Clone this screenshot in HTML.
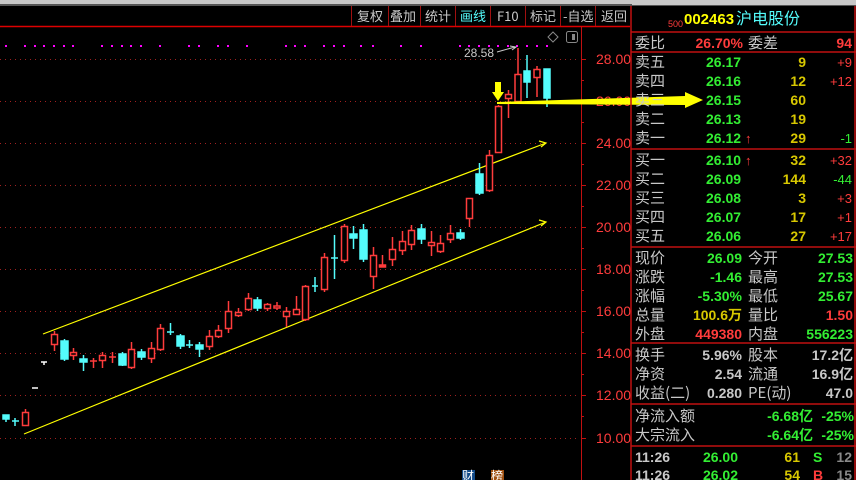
<!DOCTYPE html>
<html><head><meta charset="utf-8"><style>
html,body{margin:0;padding:0;background:#000;width:856px;height:480px;overflow:hidden}
svg{display:block}
text{font-family:"Liberation Sans","Noto Sans CJK SC",sans-serif}
.c{font-family:"Noto Sans CJK SC","WenQuanYi Zen Hei",sans-serif;font-size:15px;fill:#c8c8c8}
.n{font-size:14px;font-weight:bold}
.g{fill:#33ee33}.r{fill:#ff3c3c}.y{fill:#d8c800}.w{fill:#c8c8c8}
.tb{font-family:"Noto Sans CJK SC",sans-serif;font-size:13px;fill:#c8c8c8}
</style></head><body>
<svg width="856" height="480" viewBox="0 0 856 480" xmlns="http://www.w3.org/2000/svg">
<rect width="856" height="480" fill="#000"/>
<rect x="0" y="0" width="856" height="5" fill="#c8c8c8"/>
<rect x="0" y="4" width="856" height="2" fill="#555"/>
<g stroke="#a01010" stroke-width="1">
<line x1="0" y1="26.5" x2="630" y2="26.5" stroke="#d00" stroke-width="1.5"/>
<line x1="351.5" y1="6" x2="351.5" y2="26"/><line x1="388.5" y1="6" x2="388.5" y2="26"/><line x1="420.5" y1="6" x2="420.5" y2="26"/><line x1="455.5" y1="6" x2="455.5" y2="26"/><line x1="490.5" y1="6" x2="490.5" y2="26"/><line x1="525.5" y1="6" x2="525.5" y2="26"/><line x1="560.5" y1="6" x2="560.5" y2="26"/><line x1="595.5" y1="6" x2="595.5" y2="26"/>
</g>
<text x="357" y="21" class="tb">复权</text><text x="390" y="21" class="tb">叠加</text><text x="425" y="21" class="tb">统计</text><text x="460" y="21" class="tb" style="fill:#54fcfc">画线</text><text x="497" y="21" class="tb">F10</text><text x="530" y="21" class="tb">标记</text><text x="563" y="21" class="tb">-自选</text><text x="601" y="21" class="tb">返回</text>
<g stroke="#a02020" stroke-width="1" stroke-dasharray="1,4">
<line x1="0" y1="59.5" x2="580" y2="59.5"/><line x1="0" y1="101.5" x2="580" y2="101.5"/><line x1="0" y1="143.5" x2="580" y2="143.5"/><line x1="0" y1="185.5" x2="580" y2="185.5"/><line x1="0" y1="227.5" x2="580" y2="227.5"/><line x1="0" y1="269.5" x2="580" y2="269.5"/><line x1="0" y1="311.5" x2="580" y2="311.5"/><line x1="0" y1="353.5" x2="580" y2="353.5"/><line x1="0" y1="395.5" x2="580" y2="395.5"/><line x1="0" y1="438.5" x2="580" y2="438.5"/>
</g>
<g stroke="#c01010" stroke-width="1">
<line x1="581.5" y1="27" x2="581.5" y2="480"/>
<line x1="581" y1="59.5" x2="586" y2="59.5"/><line x1="581" y1="101.5" x2="586" y2="101.5"/><line x1="581" y1="143.5" x2="586" y2="143.5"/><line x1="581" y1="185.5" x2="586" y2="185.5"/><line x1="581" y1="227.5" x2="586" y2="227.5"/><line x1="581" y1="269.5" x2="586" y2="269.5"/><line x1="581" y1="311.5" x2="586" y2="311.5"/><line x1="581" y1="353.5" x2="586" y2="353.5"/><line x1="581" y1="395.5" x2="586" y2="395.5"/><line x1="581" y1="438.5" x2="586" y2="438.5"/>
<line x1="581" y1="80.5" x2="584" y2="80.5"/><line x1="581" y1="122.5" x2="584" y2="122.5"/><line x1="581" y1="164.5" x2="584" y2="164.5"/><line x1="581" y1="206.5" x2="584" y2="206.5"/><line x1="581" y1="248.5" x2="584" y2="248.5"/><line x1="581" y1="290.5" x2="584" y2="290.5"/><line x1="581" y1="332.5" x2="584" y2="332.5"/><line x1="581" y1="374.5" x2="584" y2="374.5"/><line x1="581" y1="416.5" x2="584" y2="416.5"/>
</g>
<g font-size="14" fill="#ff3c3c">
<text x="596" y="64">28.00</text><text x="596" y="106">26.00</text><text x="596" y="148">24.00</text><text x="596" y="190">22.00</text><text x="596" y="232">20.00</text><text x="596" y="274">18.00</text><text x="596" y="316">16.00</text><text x="596" y="358">14.00</text><text x="596" y="400">12.00</text><text x="596" y="443">10.00</text>
</g>
<path d="M553 32 L558 37 L553 42 L548 37 Z" fill="none" stroke="#888"/>
<rect x="566.5" y="31.5" width="11" height="11" rx="2" fill="none" stroke="#888"/><rect x="572" y="34" width="3" height="6" fill="#888"/>
<g fill="#ff00ff">
<rect x="5" y="45" width="2" height="2"/><rect x="24" y="45" width="2" height="2"/><rect x="34" y="45" width="2" height="2"/><rect x="43" y="45" width="2" height="2"/><rect x="53" y="45" width="2" height="2"/><rect x="63" y="45" width="2" height="2"/><rect x="72" y="45" width="2" height="2"/><rect x="101" y="45" width="2" height="2"/><rect x="111" y="45" width="2" height="2"/><rect x="121" y="45" width="2" height="2"/><rect x="130" y="45" width="2" height="2"/><rect x="140" y="45" width="2" height="2"/><rect x="159" y="45" width="2" height="2"/><rect x="188" y="45" width="2" height="2"/><rect x="198" y="45" width="2" height="2"/><rect x="217" y="45" width="2" height="2"/><rect x="227" y="45" width="2" height="2"/><rect x="246" y="45" width="2" height="2"/><rect x="285" y="45" width="2" height="2"/><rect x="294" y="45" width="2" height="2"/><rect x="304" y="45" width="2" height="2"/><rect x="323" y="45" width="2" height="2"/><rect x="333" y="45" width="2" height="2"/><rect x="343" y="45" width="2" height="2"/><rect x="360" y="45" width="2" height="2"/><rect x="372" y="45" width="2" height="2"/><rect x="400" y="45" width="2" height="2"/><rect x="420" y="45" width="2" height="2"/><rect x="459" y="45" width="2" height="2"/><rect x="468" y="45" width="2" height="2"/><rect x="478" y="45" width="2" height="2"/><rect x="488" y="45" width="2" height="2"/><rect x="497" y="45" width="2" height="2"/><rect x="507" y="45" width="2" height="2"/><rect x="516" y="45" width="2" height="2"/><rect x="526" y="45" width="2" height="2"/><rect x="536" y="45" width="2" height="2"/><rect x="546" y="45" width="2" height="2"/>
</g>
<text x="464" y="57" font-size="12" fill="#c8c8c8">28.58</text>
<path d="M497 52 L515 47 M510 46 L516 47 L512 50" stroke="#c8c8c8" fill="none"/>
<g stroke="#ffff00" stroke-width="1.2" fill="none">
<line x1="43" y1="334" x2="546" y2="143"/><path d="M539 141 L546 143 L541 147"/>
<line x1="24" y1="434" x2="546" y2="222"/><path d="M539 220 L546 222 L541 226"/>
</g>
<g stroke="#fff" stroke-width="1.5"><line x1="32" y1="388" x2="38" y2="388"/><line x1="41" y1="362" x2="47" y2="362"/><line x1="44" y1="362" x2="44" y2="365"/></g>
<g stroke-width="1.5">
<g stroke="#54fcfc" fill="#54fcfc">
<rect x="3" y="415" width="6" height="4"/><line x1="6" y1="419" x2="6" y2="422"/>
<line x1="12" y1="421" x2="19" y2="421"/><line x1="15" y1="418" x2="15" y2="426"/>
<line x1="64.5" y1="339" x2="64.5" y2="361"/><rect x="61" y="341" width="7" height="18"/>
<line x1="83.5" y1="355" x2="83.5" y2="371"/><rect x="80" y="359" width="7" height="3"/>
<line x1="122.5" y1="352" x2="122.5" y2="366"/><rect x="119" y="354" width="7" height="11"/>
<line x1="141.5" y1="349" x2="141.5" y2="360"/><rect x="138" y="352" width="7" height="5"/>
<line x1="167" y1="332" x2="174" y2="332"/><line x1="170.5" y1="323" x2="170.5" y2="335"/>
<line x1="180.5" y1="334" x2="180.5" y2="349"/><rect x="177" y="336" width="7" height="10"/>
<line x1="186" y1="345" x2="193" y2="345"/><line x1="189.5" y1="340" x2="189.5" y2="348"/>
<line x1="199.5" y1="342" x2="199.5" y2="357"/><rect x="196" y="345" width="7" height="4"/>
<line x1="257.5" y1="297" x2="257.5" y2="311"/><rect x="254" y="300" width="7" height="8"/>
<line x1="312" y1="286" x2="318" y2="286"/><line x1="315" y1="277" x2="315" y2="292"/>
<line x1="331" y1="258" x2="338" y2="258"/><line x1="334.5" y1="235" x2="334.5" y2="279"/>
<line x1="353.5" y1="226" x2="353.5" y2="249"/><rect x="350" y="234" width="7" height="4"/>
<line x1="363.5" y1="224" x2="363.5" y2="262"/><rect x="360" y="230" width="7" height="29"/>
<line x1="421.5" y1="224" x2="421.5" y2="244"/><rect x="418" y="229" width="7" height="10"/>
<line x1="460.5" y1="229" x2="460.5" y2="240"/><rect x="457" y="233" width="7" height="5"/>
<line x1="479.5" y1="163" x2="479.5" y2="195"/><rect x="476" y="174" width="7" height="19"/>
<line x1="527" y1="55" x2="527" y2="98"/><rect x="524" y="71" width="6" height="11"/>
<line x1="547" y1="69" x2="547" y2="107"/><rect x="544" y="69" width="6" height="29"/>
</g>
<g stroke="#ff3c3c" fill="#000">
<line x1="25.5" y1="409" x2="25.5" y2="426"/><rect x="22.5" y="412.5" width="6" height="13"/>
<line x1="54.5" y1="331" x2="54.5" y2="351"/><rect x="51.5" y="334.5" width="6" height="10"/>
<line x1="73.5" y1="348" x2="73.5" y2="360"/><rect x="70.5" y="352.5" width="6" height="3"/>
<line x1="90" y1="361" x2="97" y2="361"/><line x1="93.5" y1="358" x2="93.5" y2="368"/>
<line x1="102.5" y1="352" x2="102.5" y2="368"/><rect x="99.5" y="355.5" width="6" height="5"/>
<line x1="109" y1="357" x2="116" y2="357"/><line x1="112.5" y1="352" x2="112.5" y2="363"/>
<line x1="131.5" y1="342" x2="131.5" y2="369"/><rect x="128.5" y="349.5" width="6" height="18"/>
<line x1="151.5" y1="342" x2="151.5" y2="363"/><rect x="148.5" y="348.5" width="6" height="10"/>
<line x1="160.5" y1="324" x2="160.5" y2="351"/><rect x="157.5" y="328.5" width="6" height="21"/>
<line x1="209.5" y1="330" x2="209.5" y2="350"/><rect x="206.5" y="336.5" width="6" height="10"/>
<line x1="218.5" y1="325" x2="218.5" y2="338"/><rect x="215.5" y="330.5" width="6" height="6"/>
<line x1="228.5" y1="301" x2="228.5" y2="333"/><rect x="225.5" y="311.5" width="6" height="17"/>
<line x1="238.5" y1="308" x2="238.5" y2="317"/><rect x="235.5" y="312.5" width="6" height="3"/>
<line x1="248.5" y1="293" x2="248.5" y2="311"/><rect x="245.5" y="298.5" width="6" height="11"/>
<line x1="267.5" y1="303" x2="267.5" y2="311"/><rect x="264.5" y="304.5" width="6" height="4"/>
<line x1="277" y1="302" x2="277" y2="310"/><rect x="274" y="306" width="6" height="2"/>
<line x1="286.5" y1="307" x2="286.5" y2="327"/><rect x="283.5" y="311.5" width="6" height="5"/>
<line x1="296.5" y1="296" x2="296.5" y2="315"/><rect x="293.5" y="309.5" width="6" height="5"/>
<line x1="305.5" y1="285" x2="305.5" y2="321"/><rect x="302.5" y="286.5" width="6" height="33"/>
<line x1="324.5" y1="253" x2="324.5" y2="292"/><rect x="321.5" y="257.5" width="6" height="32"/>
<line x1="344.5" y1="224" x2="344.5" y2="263"/><rect x="341.5" y="226.5" width="6" height="34"/>
<line x1="373.5" y1="247" x2="373.5" y2="289"/><rect x="370.5" y="255.5" width="6" height="21"/>
<line x1="382.5" y1="255" x2="382.5" y2="267"/><rect x="379.5" y="265" width="6" height="2" fill="#ff3c3c"/>
<line x1="392.5" y1="237" x2="392.5" y2="266"/><rect x="389.5" y="249.5" width="6" height="10"/>
<line x1="402.5" y1="231" x2="402.5" y2="255"/><rect x="399.5" y="241.5" width="6" height="9"/>
<line x1="411.5" y1="225" x2="411.5" y2="250"/><rect x="408.5" y="230.5" width="6" height="14"/>
<line x1="431.5" y1="231" x2="431.5" y2="256"/><rect x="428.5" y="242.5" width="6" height="3"/>
<line x1="440.5" y1="235" x2="440.5" y2="253"/><rect x="437.5" y="243.5" width="6" height="8"/>
<line x1="450.5" y1="225" x2="450.5" y2="243"/><rect x="447.5" y="233.5" width="6" height="6"/>
<line x1="469.5" y1="198" x2="469.5" y2="227"/><rect x="466.5" y="198.5" width="6" height="20"/>
<line x1="489.5" y1="150" x2="489.5" y2="192"/><rect x="486.5" y="155.5" width="6" height="35"/>
<line x1="498.5" y1="105" x2="498.5" y2="153"/><rect x="495.5" y="106.5" width="6" height="46"/>
<line x1="508.5" y1="90" x2="508.5" y2="118"/><rect x="505.5" y="94.5" width="6" height="4"/>
<line x1="518" y1="48" x2="518" y2="102"/><rect x="515" y="74.5" width="6" height="27"/>
<line x1="537" y1="66" x2="537" y2="97"/><rect x="534" y="69.5" width="6" height="8"/>
</g>
</g>
<path d="M495 82 L501 82 L501 92 L504 92 L498 101 L492 92 L495 92 Z" fill="#ffff00"/>
<path d="M497 102 L685 96 L685 92 L703 100 L685 108 L685 105 L497 104 Z" fill="#ffff00"/>
<rect x="462" y="470" width="13" height="10" fill="#114a88"/><text x="462" y="480" class="c" style="font-size:12px;fill:#fff">财</text>
<rect x="491" y="470" width="13" height="10" fill="#a05010"/><text x="491" y="480" class="c" style="font-size:12px;fill:#fff">榜</text>
<g stroke="#c01010" stroke-width="1.5">
<line x1="631" y1="6" x2="631" y2="480"/><line x1="855" y1="6" x2="855" y2="480"/>
<line x1="631" y1="32" x2="856" y2="32"/><line x1="631" y1="52" x2="856" y2="52"/><line x1="631" y1="149" x2="856" y2="149"/><line x1="631" y1="247" x2="856" y2="247"/><line x1="631" y1="343" x2="856" y2="343"/><line x1="631" y1="404" x2="856" y2="404"/><line x1="631" y1="446" x2="856" y2="446"/>
</g>
<rect x="632" y="0" width="224" height="5" fill="#c8c8c8"/>
<text x="668" y="27" font-size="9" fill="#ff3c3c">500</text>
<text x="684" y="24" font-size="15" font-weight="bold" fill="#ffff00">002463</text>
<text x="736" y="24" class="c" style="fill:#54fcfc;font-size:16px">沪电股份</text>
<text x="635" y="48" class="c">委比</text><text x="743" y="48" class="n r" text-anchor="end">26.70%</text><text x="748" y="48" class="c">委差</text><text x="852" y="48" class="n r" text-anchor="end">94</text>
<g>
<text x="635" y="67" class="c">卖五</text><text x="706" y="67" class="n g">26.17</text><text x="806" y="67" class="n y" text-anchor="end">9</text><text x="852" y="67" font-size="13" class="r" text-anchor="end">+9</text>
<text x="635" y="86" class="c">卖四</text><text x="706" y="86" class="n g">26.16</text><text x="806" y="86" class="n y" text-anchor="end">12</text><text x="852" y="86" font-size="13" class="r" text-anchor="end">+12</text>
<text x="635" y="105" class="c">卖三</text><text x="706" y="105" class="n g">26.15</text><text x="806" y="105" class="n y" text-anchor="end">60</text>
<text x="635" y="124" class="c">卖二</text><text x="706" y="124" class="n g">26.13</text><text x="806" y="124" class="n y" text-anchor="end">19</text>
<text x="635" y="143" class="c">卖一</text><text x="706" y="143" class="n g">26.12</text><text x="745" y="143" font-size="13" class="r" font-weight="bold">↑</text><text x="806" y="143" class="n y" text-anchor="end">29</text><text x="852" y="143" font-size="13" class="g" text-anchor="end">-1</text>
<text x="635" y="165" class="c">买一</text><text x="706" y="165" class="n g">26.10</text><text x="745" y="165" font-size="13" class="r" font-weight="bold">↑</text><text x="806" y="165" class="n y" text-anchor="end">32</text><text x="852" y="165" font-size="13" class="r" text-anchor="end">+32</text>
<text x="635" y="184" class="c">买二</text><text x="706" y="184" class="n g">26.09</text><text x="806" y="184" class="n y" text-anchor="end">144</text><text x="852" y="184" font-size="13" class="g" text-anchor="end">-44</text>
<text x="635" y="203" class="c">买三</text><text x="706" y="203" class="n g">26.08</text><text x="806" y="203" class="n y" text-anchor="end">3</text><text x="852" y="203" font-size="13" class="r" text-anchor="end">+3</text>
<text x="635" y="222" class="c">买四</text><text x="706" y="222" class="n g">26.07</text><text x="806" y="222" class="n y" text-anchor="end">17</text><text x="852" y="222" font-size="13" class="r" text-anchor="end">+1</text>
<text x="635" y="241" class="c">买五</text><text x="706" y="241" class="n g">26.06</text><text x="806" y="241" class="n y" text-anchor="end">27</text><text x="852" y="241" font-size="13" class="r" text-anchor="end">+17</text>
</g>
<g>
<text x="635" y="263" class="c">现价</text><text x="742" y="263" class="n g" text-anchor="end">26.09</text><text x="748" y="263" class="c">今开</text><text x="853" y="263" class="n g" text-anchor="end">27.53</text>
<text x="635" y="282" class="c">涨跌</text><text x="742" y="282" class="n g" text-anchor="end">-1.46</text><text x="748" y="282" class="c">最高</text><text x="853" y="282" class="n g" text-anchor="end">27.53</text>
<text x="635" y="301" class="c">涨幅</text><text x="742" y="301" class="n g" text-anchor="end">-5.30%</text><text x="748" y="301" class="c">最低</text><text x="853" y="301" class="n g" text-anchor="end">25.67</text>
<text x="635" y="320" class="c">总量</text><text x="742" y="320" class="n y" text-anchor="end">100.6万</text><text x="748" y="320" class="c">量比</text><text x="853" y="320" class="n r" text-anchor="end">1.50</text>
<text x="635" y="339" class="c">外盘</text><text x="742" y="339" class="n r" text-anchor="end">449380</text><text x="748" y="339" class="c">内盘</text><text x="853" y="339" class="n g" text-anchor="end">556223</text>
<text x="635" y="360" class="c">换手</text><text x="742" y="360" class="n w" text-anchor="end">5.96%</text><text x="748" y="360" class="c">股本</text><text x="853" y="360" class="n w" text-anchor="end">17.2亿</text>
<text x="635" y="379" class="c">净资</text><text x="742" y="379" class="n w" text-anchor="end">2.54</text><text x="748" y="379" class="c">流通</text><text x="853" y="379" class="n w" text-anchor="end">16.9亿</text>
<text x="635" y="398" class="c">收益(二)</text><text x="742" y="398" class="n w" text-anchor="end">0.280</text><text x="748" y="398" class="c">PE(动)</text><text x="853" y="398" class="n w" text-anchor="end">47.0</text>
<text x="635" y="421" class="c">净流入额</text><text x="813" y="421" class="n g" text-anchor="end">-6.68亿</text><text x="854" y="421" class="n g" text-anchor="end">-25%</text>
<text x="635" y="440" class="c">大宗流入</text><text x="813" y="440" class="n g" text-anchor="end">-6.64亿</text><text x="854" y="440" class="n g" text-anchor="end">-25%</text>
<text x="635" y="462" class="n w">11:26</text><text x="738" y="462" class="n g" text-anchor="end">26.00</text><text x="800" y="462" class="n y" text-anchor="end">61</text><text x="813" y="462" class="n g">S</text><text x="852" y="462" class="n" fill="#888" text-anchor="end">12</text>
<text x="635" y="480" class="n w">11:26</text><text x="738" y="480" class="n g" text-anchor="end">26.02</text><text x="800" y="480" class="n y" text-anchor="end">54</text><text x="813" y="480" class="n r">B</text><text x="852" y="480" class="n" fill="#888" text-anchor="end">15</text>
</g>
</svg>
</body></html>
